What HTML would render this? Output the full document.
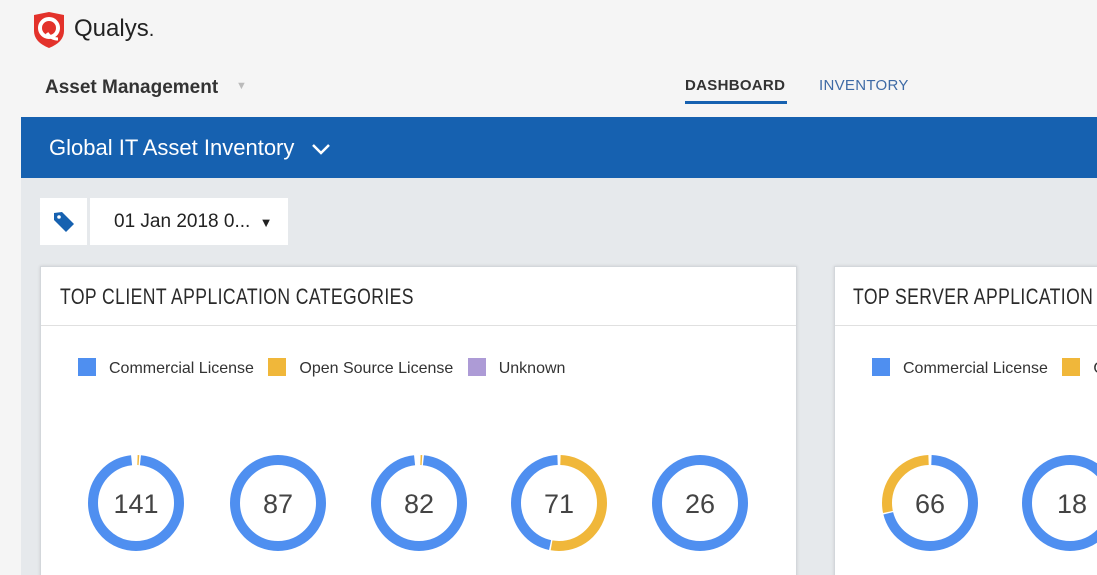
<!DOCTYPE html>
<html><head><meta charset="utf-8"><style>
*{margin:0;padding:0;box-sizing:border-box}
html,body{width:1097px;height:575px;overflow:hidden}
body{background:#f5f5f5;font-family:"Liberation Sans",sans-serif;position:relative}
.abs{position:absolute}
.hdr{left:21px;top:117px;width:1076px;height:61px;background:#1661b0;color:#fff;font-size:22px;line-height:61px;padding-left:28px}
.content{left:21px;top:178px;width:1076px;height:397px;background:#e6e9ec}
.card{background:#fff;border:1px solid #d3d7db;box-shadow:0 0 3px rgba(0,0,0,.12)}
.title{font-family:"Liberation Sans Narrow","Liberation Sans",sans-serif;font-size:22px;color:#2a2a2a;letter-spacing:.5px;transform:scaleX(.8);transform-origin:left;white-space:nowrap}
.leg{font-size:16px;color:#333;white-space:nowrap}
.sq{display:inline-block;width:18px;height:18px;vertical-align:-3px;margin-right:13px}
</style></head><body>
<svg class="abs" style="left:31px;top:11px" width="36" height="38" viewBox="0 0 36 38">
<path d="M3 4 L18 1 L33 4 L33 20 Q33 31 18 37 Q3 31 3 20 Z" fill="#e3322b"/>
<circle cx="18" cy="17" r="9" fill="none" stroke="#fff" stroke-width="4"/>
<path d="M16 22 Q20 28 27 28" fill="none" stroke="#fff" stroke-width="3"/>
</svg>
<div class="abs" style="left:74px;top:15px;font-size:24px;color:#222">Qualys<span style="font-size:20px">.</span></div>
<div class="abs" style="left:45px;top:77px;font-size:19px;font-weight:bold;color:#333">Asset Management</div>
<div class="abs" style="left:236px;top:80px;font-size:11px;color:#bbb">▼</div>
<div class="abs" style="left:685px;top:77px;font-size:15px;font-weight:bold;color:#333;letter-spacing:.3px">DASHBOARD</div>
<div class="abs" style="left:685px;top:101px;width:102px;height:3px;background:#1661b0"></div>
<div class="abs" style="left:819px;top:77px;font-size:15px;color:#3e6aa5;letter-spacing:.3px">INVENTORY</div>
<div class="abs hdr">Global IT Asset Inventory <svg width="20" height="14" style="margin-left:10px;vertical-align:-1px"><path d="M2 3 L10 11 L18 3" fill="none" stroke="#fff" stroke-width="2.5"/></svg></div>
<div class="abs content"></div>
<div class="abs" style="left:40px;top:198px;width:47px;height:47px;background:#fff"></div>
<svg class="abs" style="left:53px;top:211px" width="22" height="22" viewBox="0 0 22 22"><path d="M1 2 L9 1 L21 13 L13 21 L1 9 Z" fill="#1661b0"/><circle cx="6" cy="6" r="1.8" fill="#fff"/></svg>
<div class="abs" style="left:90px;top:198px;width:198px;height:47px;background:#fff;font-size:19px;color:#222;line-height:47px;padding-left:24px">01 Jan 2018 0... <span style="font-size:13px;margin-left:4px">▼</span></div>
<div class="abs card" style="left:40px;top:266px;width:757px;height:320px"></div>
<div class="abs" style="left:41px;top:325px;width:755px;height:1px;background:#e0e0e0"></div>
<div class="abs title" style="left:60px;top:284px">TOP CLIENT APPLICATION CATEGORIES</div>
<div class="abs leg" style="left:78px;top:358px"><span class="sq" style="background:#4f8ff0"></span>Commercial License <span class="sq" style="background:#f0b73a;margin-left:10px"></span>Open Source License <span class="sq" style="background:#ad9bd6;margin-left:10px"></span>Unknown</div>
<div class="abs card" style="left:834px;top:266px;width:300px;height:320px"></div>
<div class="abs" style="left:835px;top:325px;width:262px;height:1px;background:#e0e0e0"></div>
<div class="abs title" style="left:853px;top:284px">TOP SERVER APPLICATION CATEGORIES</div>
<div class="abs leg" style="left:872px;top:358px"><span class="sq" style="background:#4f8ff0"></span>Commercial License <span class="sq" style="background:#f0b73a;margin-left:10px"></span>Open Source License</div>
<svg class="abs" style="left:0;top:440px" width="1097" height="135" viewBox="0 440 1097 135" font-family="Liberation Sans,sans-serif" font-size="27" fill="#444" text-anchor="middle">
<g fill="none" stroke-width="10">
<circle cx="136" cy="503" r="43" pathLength="360" transform="rotate(-90 136 503)" stroke="#4f8ff0" stroke-dasharray="348 360" stroke-dashoffset="-6"/>
<circle cx="136" cy="503" r="43" pathLength="360" transform="rotate(-90 136 503)" stroke="#f0b73a" stroke-dasharray="2 360" stroke-dashoffset="-2"/>
<circle cx="278" cy="503" r="43" stroke="#4f8ff0"/>
<circle cx="419" cy="503" r="43" pathLength="360" transform="rotate(-90 419 503)" stroke="#4f8ff0" stroke-dasharray="348 360" stroke-dashoffset="-6"/>
<circle cx="419" cy="503" r="43" pathLength="360" transform="rotate(-90 419 503)" stroke="#f0b73a" stroke-dasharray="2 360" stroke-dashoffset="-2"/>
<circle cx="559" cy="503" r="43" pathLength="360" transform="rotate(-90 559 503)" stroke="#f0b73a" stroke-dasharray="188 360" stroke-dashoffset="-2"/>
<circle cx="559" cy="503" r="43" pathLength="360" transform="rotate(-90 559 503)" stroke="#4f8ff0" stroke-dasharray="166 360" stroke-dashoffset="-192"/>
<circle cx="700" cy="503" r="43" stroke="#4f8ff0"/>
<circle cx="930" cy="503" r="43" pathLength="360" transform="rotate(-90 930 503)" stroke="#4f8ff0" stroke-dasharray="254 360" stroke-dashoffset="-2"/>
<circle cx="930" cy="503" r="43" pathLength="360" transform="rotate(-90 930 503)" stroke="#f0b73a" stroke-dasharray="100 360" stroke-dashoffset="-258"/>
<circle cx="1070" cy="503" r="43" stroke="#4f8ff0"/>
</g>
<text x="136" y="513">141</text><text x="278" y="513">87</text><text x="419" y="513">82</text><text x="559" y="513">71</text><text x="700" y="513">26</text><text x="930" y="513">66</text><text x="1072" y="513">18</text>
</svg>
</body></html>
